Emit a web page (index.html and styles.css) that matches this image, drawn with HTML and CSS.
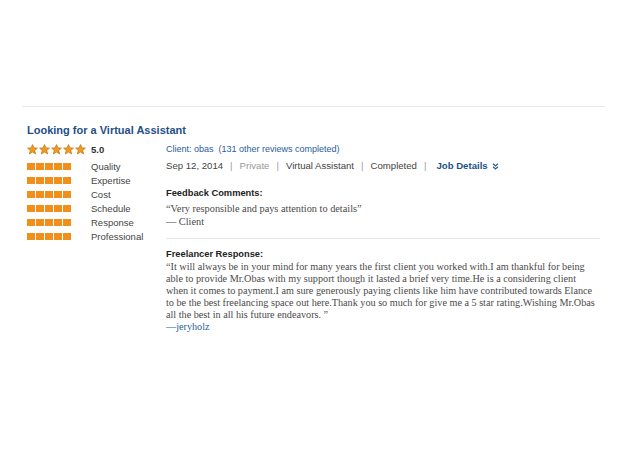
FILE: index.html
```html
<!DOCTYPE html>
<html>
<head>
<meta charset="utf-8">
<link rel="stylesheet" href="styles.css">
</head>
<body>
<div class="review">
  <h2 class="title">Looking for a Virtual Assistant</h2>
  <div class="cols">
    <div class="left">
      <div class="overall">
        <div class="stars">
          <svg width="59" height="11" viewBox="0 0 59 11">
            <defs>
              <path id="st" d="M5.5 0.6 L6.9 3.9 L10.4 4.1 L7.7 6.4 L8.6 9.9 L5.5 8 L2.4 9.9 L3.3 6.4 L0.6 4.1 L4.1 3.9 Z"/>
            </defs>
            <use href="#st" x="0" fill="#ef9b22" stroke="#c87810" stroke-width="0.8" stroke-linejoin="round"/>
            <use href="#st" x="12" fill="#ef9b22" stroke="#c87810" stroke-width="0.8" stroke-linejoin="round"/>
            <use href="#st" x="24" fill="#ef9b22" stroke="#c87810" stroke-width="0.8" stroke-linejoin="round"/>
            <use href="#st" x="36" fill="#ef9b22" stroke="#c87810" stroke-width="0.8" stroke-linejoin="round"/>
            <use href="#st" x="48" fill="#ef9b22" stroke="#c87810" stroke-width="0.8" stroke-linejoin="round"/>
          </svg>
        </div>
        <span class="score">5.0</span>
      </div>
      <ul class="ratings">
        <li><span class="bar"><i></i><i></i><i></i><i></i><i></i></span><span class="lbl">Quality</span></li>
        <li><span class="bar"><i></i><i></i><i></i><i></i><i></i></span><span class="lbl">Expertise</span></li>
        <li><span class="bar"><i></i><i></i><i></i><i></i><i></i></span><span class="lbl">Cost</span></li>
        <li><span class="bar"><i></i><i></i><i></i><i></i><i></i></span><span class="lbl">Schedule</span></li>
        <li><span class="bar"><i></i><i></i><i></i><i></i><i></i></span><span class="lbl">Response</span></li>
        <li><span class="bar"><i></i><i></i><i></i><i></i><i></i></span><span class="lbl">Professional</span></li>
      </ul>
    </div>
    <div class="right">
      <div class="client">Client: obas &nbsp;(131 other reviews completed)</div>
      <div class="meta">
        <span>Sep 12, 2014</span><span class="sep">|</span><span class="muted">Private</span><span class="sep">|</span><span>Virtual Assistant</span><span class="sep">|</span><span>Completed</span><span class="sep">|</span><span class="details">Job Details <svg width="7" height="7" viewBox="0 0 7 7"><path d="M1 0.8 L3.5 3 L6 0.8 M1 3.8 L3.5 6 L6 3.8" fill="none" stroke="#2a5d9a" stroke-width="1.3"/></svg></span>
      </div>
      <div class="block feedback">
        <h3>Feedback Comments:</h3>
        <p class="quote">“Very responsible and pays attention to details”</p>
        <p class="quote">— Client</p>
      </div>
      <div class="block response">
        <h3>Freelancer Response:</h3>
        <p class="quote long">“It will always be in your mind for many years the first client you worked with.I am thankful for being able to provide Mr.Obas with my support though it lasted a brief very time.He is a considering client when it comes to payment.I am sure generously paying clients like him have contributed towards Elance to be the best freelancing space out here.Thank you so much for give me a 5 star rating.Wishing Mr.Obas all the best in all his future endeavors. ”</p>
        <p class="quote long author">—jeryholz</p>
      </div>
    </div>
  </div>
</div>
</body>
</html>
```

FILE: styles.css
```css
html, body {
  margin: 0;
  padding: 0;
  background: #ffffff;
}

body {
  font-family: "Liberation Sans", Arial, sans-serif;
  color: #333333;
}

.review {
  margin: 106px 0 0 22px;
  width: 583px;
  border-top: 1px solid #e8e8e8;
  padding: 0 0 0 5px;
  box-sizing: border-box;
}

.title {
  margin: 16px 0 0 0;
  font-size: 11px;
  font-weight: bold;
  color: #1f4f88;
  line-height: 14px;
}

.cols {
  display: flex;
  margin-top: 5px;
}

.left {
  width: 139px;
  flex: none;
}

.overall {
  display: flex;
  align-items: center;
  height: 14px;
}

.stars {
  width: 64px;
  height: 11px;
  display: flex;
}

.score {
  font-size: 9.5px;
  font-weight: bold;
  color: #333;
}

.ratings {
  list-style: none;
  margin: 3px 0 0 0;
  padding: 0;
}

.ratings li {
  display: flex;
  align-items: center;
  height: 14px;
}

.bar {
  display: flex;
  gap: 1px;
  width: 64px;
}

.bar i {
  display: block;
  width: 8px;
  height: 7px;
  background: #f0901a;
}

.lbl {
  font-size: 9.5px;
  color: #444;
}

.right {
  width: 434px;
  flex: none;
}

.client {
  font-size: 9px;
  color: #2a5d9a;
  line-height: 14px;
}

.meta {
  margin-top: 3px;
  font-size: 9.6px;
  color: #444;
  line-height: 14px;
  display: flex;
  align-items: center;
}

.meta .sep {
  margin: 0 7px;
  color: #999;
}

.meta .muted {
  color: #9a9a9a;
}

.meta .details {
  margin-left: 3px;
  font-weight: bold;
  color: #1f4f88;
  display: flex;
  align-items: center;
  gap: 4px;
}

.block h3 {
  margin: 0;
  font-size: 9.3px;
  font-weight: bold;
  color: #222;
  line-height: 14px;
}

.feedback {
  margin-top: 13px;
  padding-bottom: 10px;
  border-bottom: 1px solid #e6e6e6;
}

.response {
  margin-top: 8px;
}

.quote {
  margin: 0;
  font-family: "Liberation Serif", "Times New Roman", serif;
  font-size: 10.3px;
  line-height: 13px;
  color: #4a4a4a;
}

.quote.long {
  font-size: 10.2px;
  line-height: 12px;
}

.feedback h3 {
  margin-bottom: 2px;
}

.response h3 {
  margin-bottom: 0;
}

.author {
  color: #2a5d9a;
}
```
